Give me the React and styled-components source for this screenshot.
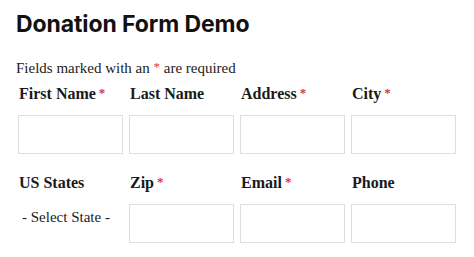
import React from "react";
import styled, { createGlobalStyle } from "styled-components";

const Global = createGlobalStyle`
  html, body { margin: 0; padding: 0; background: #fff; }
  body { font-family: "Liberation Serif", serif; color: #1a1a1a; }
  * { box-sizing: border-box; }
`;

const Page = styled.div`
  padding: 10px 16px 0 16px;
`;

const Title = styled.h1`
  margin: 0;
  font-family: Inter, "Noto Sans", sans-serif;
  font-weight: 700;
  font-size: 23px;
  line-height: 28px;
  color: #111;
  letter-spacing: -0.1px;
`;

const Note = styled.p`
  margin: 20px 0 0 0;
  font-size: 15px;
  line-height: 20px;
  color: #222;
`;

const Grid = styled.div`
  display: grid;
  grid-template-columns: repeat(4, 105px);
  column-gap: 6px;
  row-gap: 18px;
  margin-top: 4.6px;
  padding-left: 2px;
`;

const Field = styled.div`
  display: flex;
  flex-direction: column;
`;

const Label = styled.label`
  display: block;
  height: 21.5px;
  font-size: 16px;
  font-weight: 700;
  line-height: 20px;
  padding: 1.5px 0 0 1px;
  margin-bottom: 10.9px;
  color: #1a1a1a;
  white-space: nowrap;
`;

const Req = styled.span`
  color: #d9304a;
  font-size: 13px;
  line-height: 0;
  margin-left: ${(p) => (p.$inline ? "0" : "3px")};
  position: relative;
  top: -2px;
`;

const Input = styled.input`
  display: block;
  width: 105px;
  height: 39px;
  border: 1px solid #dedede;
  background: #fff;
  border-radius: 0;
  outline: none;
`;

const Select = styled.select`
  appearance: none;
  -webkit-appearance: none;
  border: none;
  background: transparent;
  font-family: "Liberation Serif", serif;
  font-size: 15px;
  color: #222;
  height: 28px;
  padding: 0 4px;
  width: 105px;
  margin-top: -1px;
  outline: none;
`;

const fields1 = [
  { label: "First Name", req: true },
  { label: "Last Name", req: false },
  { label: "Address", req: true },
  { label: "City", req: true },
];

const fields2 = [
  { label: "Zip", req: true },
  { label: "Email", req: true },
  { label: "Phone", req: false },
];

function TextField({ label, req }) {
  return (
    <Field>
      <Label>
        {label}
        {req && <Req>*</Req>}
      </Label>
      <Input type="text" />
    </Field>
  );
}

export default function App() {
  return (
    <>
      <Global />
      <Page>
        <Title>Donation Form Demo</Title>
        <Note>
          Fields marked with an <Req $inline>*</Req> are required
        </Note>
        <Grid>
          {fields1.map((f) => (
            <TextField key={f.label} {...f} />
          ))}
          <Field>
            <Label>US States</Label>
            <Select defaultValue="">
              <option value="">- Select State -</option>
            </Select>
          </Field>
          {fields2.map((f) => (
            <TextField key={f.label} {...f} />
          ))}
        </Grid>
      </Page>
    </>
  );
}
